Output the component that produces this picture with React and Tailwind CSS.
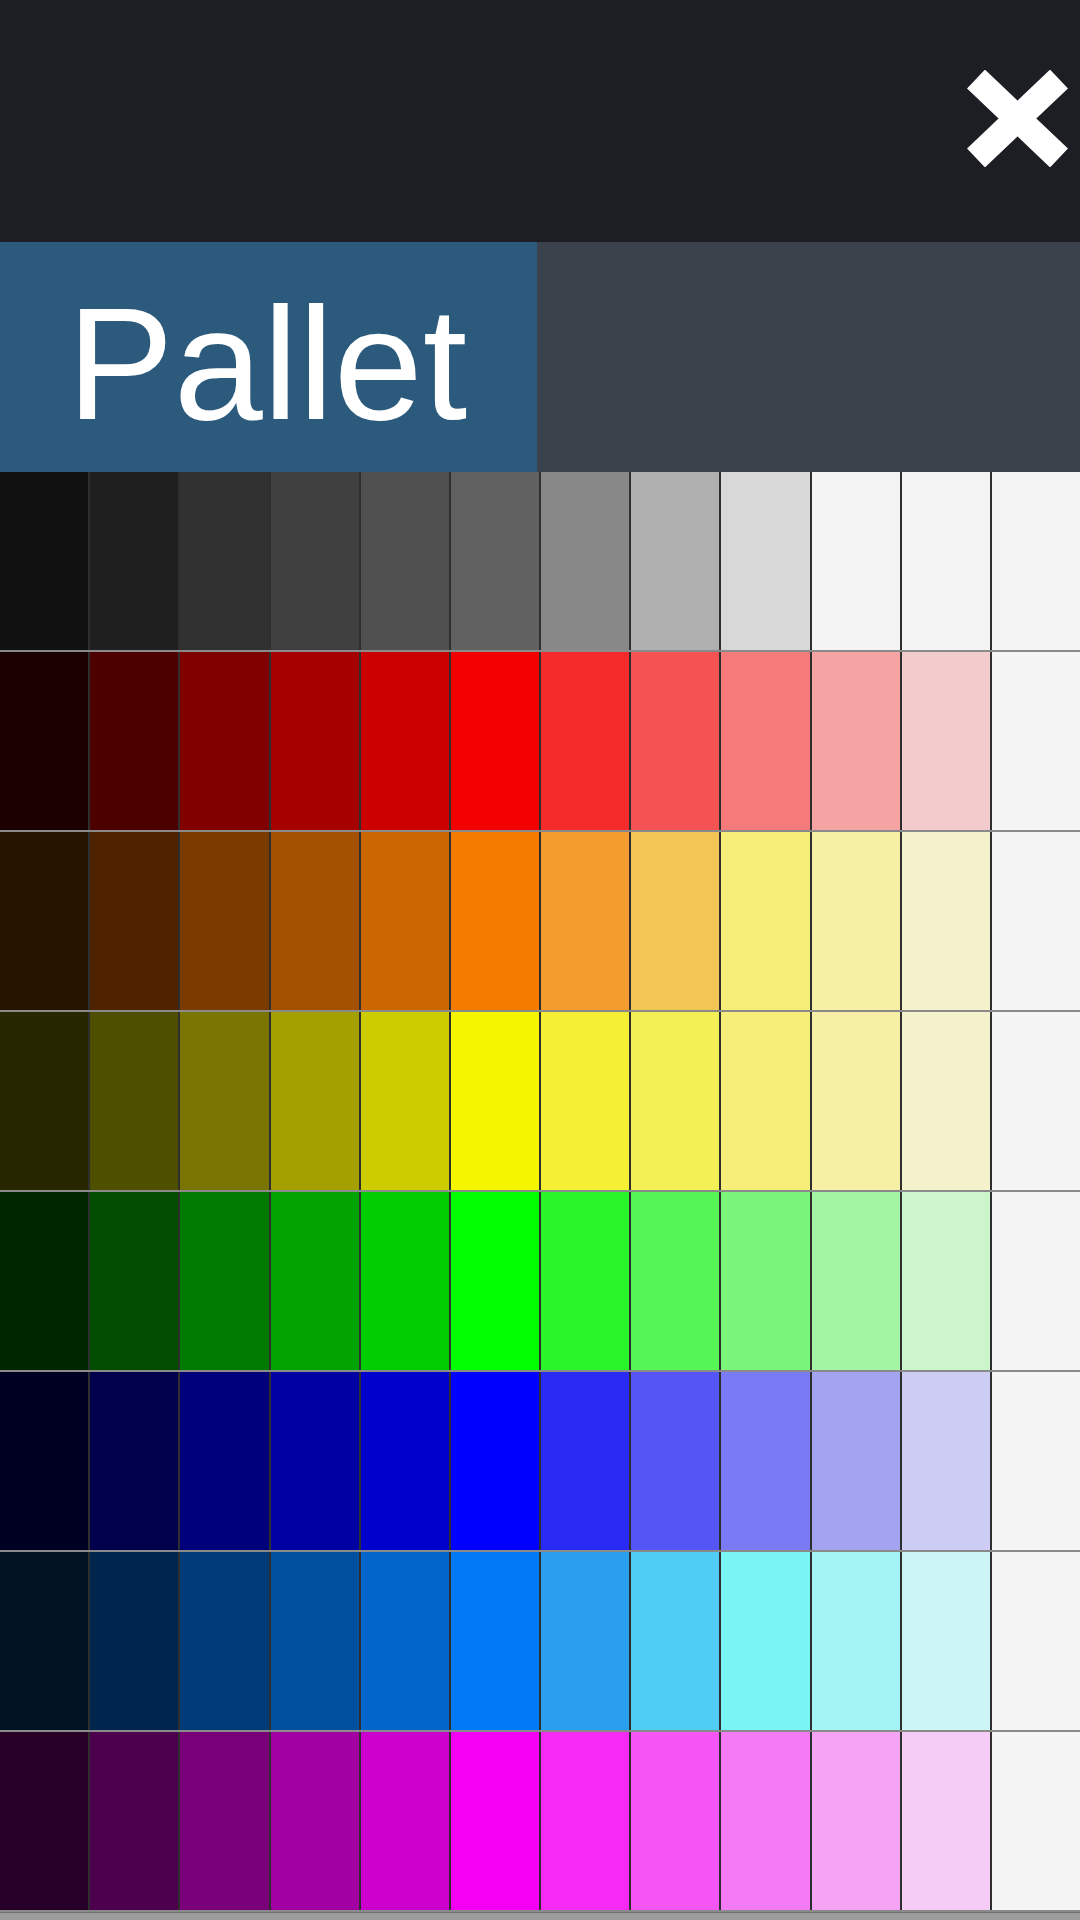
const rows = [
  ['bg-[#111111]', 'bg-[#1f1f1f]', 'bg-[#303030]', 'bg-[#404040]', 'bg-[#505050]', 'bg-[#616161]', 'bg-[#888888]', 'bg-[#b0b0b0]', 'bg-[#d8d8d8]', 'bg-[#f4f4f4]', 'bg-[#f4f4f4]', 'bg-[#f4f4f4]'],
  ['bg-[#1a0000]', 'bg-[#4d0000]', 'bg-[#800000]', 'bg-[#a60000]', 'bg-[#cc0000]', 'bg-[#f20000]', 'bg-[#f52a2a]', 'bg-[#f55353]', 'bg-[#f57a7a]', 'bg-[#f5a3a3]', 'bg-[#f2cccc]', 'bg-[#f4f4f4]'],
  ['bg-[#261300]', 'bg-[#4f2200]', 'bg-[#7a3a00]', 'bg-[#a35000]', 'bg-[#cc6600]', 'bg-[#f57a00]', 'bg-[#f59c2e]', 'bg-[#f2c555]', 'bg-[#f5ef7a]', 'bg-[#f5f0a3]', 'bg-[#f3f2cd]', 'bg-[#f4f4f4]'],
  ['bg-[#262600]', 'bg-[#4f4f00]', 'bg-[#7a7500]', 'bg-[#a3a000]', 'bg-[#cccc00]', 'bg-[#f5f500]', 'bg-[#f5f033]', 'bg-[#f2f055]', 'bg-[#f5ef7a]', 'bg-[#f5f0a3]', 'bg-[#f3f2cd]', 'bg-[#f4f4f4]'],
  ['bg-[#002600]', 'bg-[#004d00]', 'bg-[#007a00]', 'bg-[#00a300]', 'bg-[#00cc00]', 'bg-[#00ff00]', 'bg-[#2af52a]', 'bg-[#55f555]', 'bg-[#7af57a]', 'bg-[#a3f5a3]', 'bg-[#ccf5cc]', 'bg-[#f4f4f4]'],
  ['bg-[#000022]', 'bg-[#00004d]', 'bg-[#00007a]', 'bg-[#0000a3]', 'bg-[#0000cc]', 'bg-[#0000ff]', 'bg-[#2a2af5]', 'bg-[#5555f5]', 'bg-[#7a7af5]', 'bg-[#a3a3f2]', 'bg-[#ccccf5]', 'bg-[#f4f4f4]'],
  ['bg-[#001322]', 'bg-[#00264f]', 'bg-[#003b78]', 'bg-[#0050a0]', 'bg-[#0066cc]', 'bg-[#007af5]', 'bg-[#2a9ff0]', 'bg-[#50cdf5]', 'bg-[#7af5f5]', 'bg-[#a3f5f5]', 'bg-[#ccf5f5]', 'bg-[#f4f4f4]'],
  ['bg-[#260026]', 'bg-[#4d004d]', 'bg-[#7a007a]', 'bg-[#a300a3]', 'bg-[#cc00cc]', 'bg-[#f500f5]', 'bg-[#f52af5]', 'bg-[#f555f5]', 'bg-[#f57af5]', 'bg-[#f5a3f5]', 'bg-[#f5ccf5]', 'bg-[#f4f4f4]'],
];

export default function App() {
  return (
    <div className="w-[1080px] h-[1920px] flex flex-col bg-[#1c1e23] font-['Liberation_Sans',Arial,sans-serif] overflow-hidden">
      {/* top bar with close */}
      <div className="h-[242px] flex items-center justify-end pr-[12px] pb-[6px] shrink-0">
        <svg width="101" height="97" viewBox="0 0 101 97" aria-label="close">
          <path d="M9 9 L92 88 M92 9 L9 88" stroke="#ffffff" strokeWidth="26" strokeLinecap="butt" />
        </svg>
      </div>

      {/* tabs */}
      <div className="h-[230px] flex bg-[#3b424b] shrink-0">
        <div className="w-[537px] bg-[#2b5a7c] pl-[67px] pt-[42px]">
          <span className="block text-white text-[160px] leading-none">Pallet</span>
        </div>
      </div>

      {/* colour grid */}
      <div className="flex flex-col">
        {rows.map((row, i) => (
          <div key={i} className="h-[180px] flex flex-col">
            <div className="flex-1 flex gap-[2px] bg-[#2e2e2e]">
              {row.map((c, j) => (
                <div key={j} className={`flex-1 ${c}`} />
              ))}
            </div>
            <div className="h-[2px] bg-[#8a8a8a]" />
          </div>
        ))}
      </div>
      <div className="flex-1 bg-[#9c9c9c] border-t border-[#6f6f6f]" />
    </div>
  );
}
